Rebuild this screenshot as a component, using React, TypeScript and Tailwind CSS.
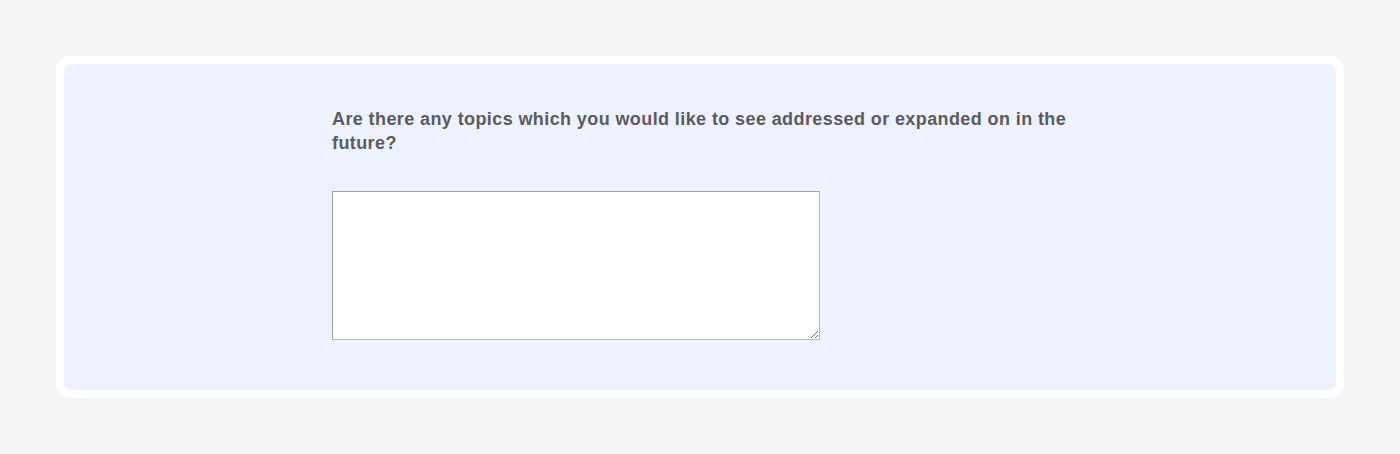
export default function App() {
  return (
    <div className="min-h-[454px] bg-[#f4f5f7] px-[56px] pt-[56px] pb-[57px] font-['Liberation_Sans',Arial,sans-serif]">
      <div className="rounded-[14px] bg-white p-[8px]">
        <div className="rounded-[8px] bg-[#eef2fe] pt-[43px] pb-[50px]">
          <div className="mx-auto w-[736px]">
            <label
              htmlFor="topics"
              className="block text-[18px] font-bold leading-[24px] tracking-[0.4px] text-[#5b5b5f]"
            >
              Are there any topics which you would like to see addressed or expanded on in the future?
            </label>
            <textarea
              id="topics"
              className="mt-[36px] block h-[149px] w-[488px] resize border border-[#b5b5b5] border-t-[#a0a0a0] border-l-[#a0a0a0] bg-white p-1 text-sm outline-none"
            />
          </div>
        </div>
      </div>
    </div>
  );
}
